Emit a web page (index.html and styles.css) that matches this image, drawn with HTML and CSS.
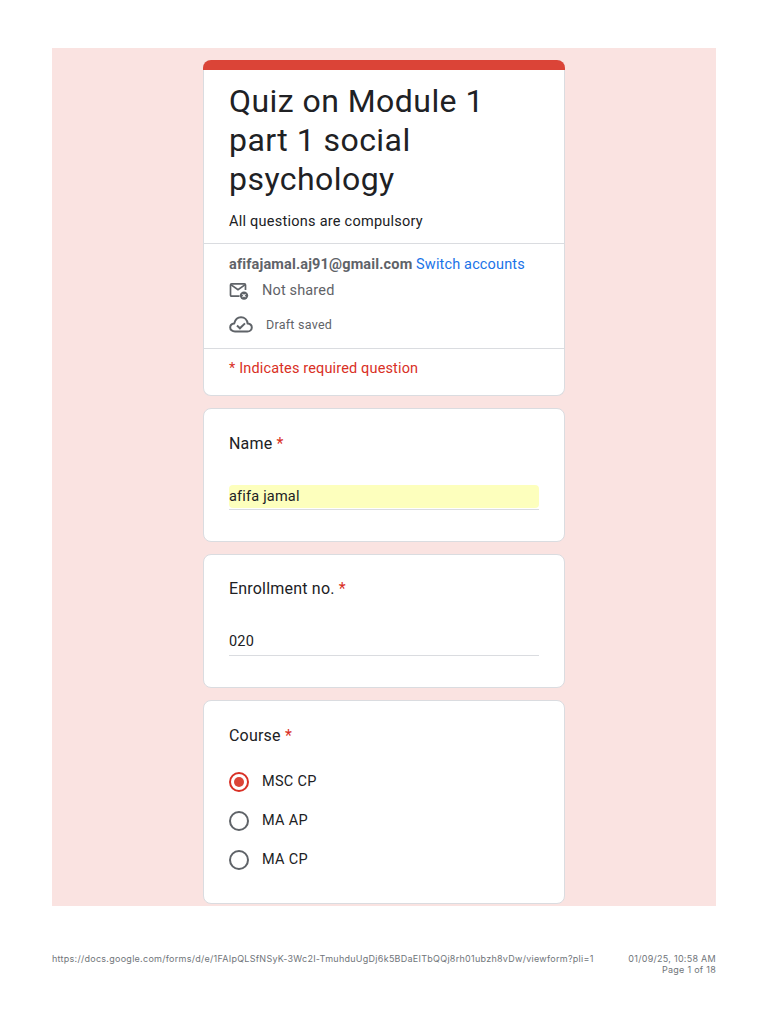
FILE: index.html
```html
<!DOCTYPE html>
<html lang="en">

<head>
    <meta charset="UTF-8">
    <meta name="viewport" content="width=device-width, initial-scale=1.0">
    <title>Quiz on Module 1 part 1 social psychology</title>
    <link rel="stylesheet" href="styles.css">
</head>

<body>
    <main class="sheet">
        <section class="card header_card">
            <div class="top_bar"></div>
            <div class="title_box">
                <h1>Quiz on Module 1 part 1 social psychology</h1>
                <p class="desc">All questions are compulsory</p>
            </div>
            <div class="account_box">
                <p class="account"><b>afifajamal.aj91@gmail.com</b> <a href="#">Switch accounts</a></p>
                <div class="status_row">
                    <svg class="status_icon mail_icon" width="20" height="20" viewBox="0 0 20 20" fill="none" stroke="#5f6368" stroke-width="1.7">
                        <path d="M10.5 15.2H2.6C1.9 15.2 1.5 14.8 1.5 14.1V3.9C1.5 3.2 1.9 2.8 2.6 2.8H15.4C16.1 2.8 16.5 3.2 16.5 3.9V9"/>
                        <path d="M1.8 3.6L9 8.8L16.2 3.6"/>
                        <circle cx="15" cy="14.6" r="4.2" fill="#5f6368" stroke="none"/>
                        <path d="M13.5 13.1L16.5 16.1M16.5 13.1L13.5 16.1" stroke="#fff" stroke-width="1.1"/>
                    </svg>
                    <span class="not_shared">Not shared</span>
                </div>
                <div class="status_row draft_row">
                    <svg class="status_icon cloud_icon" width="24" height="20" viewBox="0 0 24 20" fill="none" stroke="#5f6368" stroke-width="2">
                        <path d="M6 17.5C3.2 17.5 1.2 15.7 1.2 13.4C1.2 11.3 2.9 9.6 5.2 9.4C6.2 5.6 8.9 3.2 12 3.2C15.4 3.2 18.2 5.9 18.6 9.4C21 9.6 22.8 11.2 22.8 13.4C22.8 15.7 20.9 17.5 18.4 17.5Z"/>
                        <path d="M8 11.6L10.9 14.3L16 9.4"/>
                    </svg>
                    <span class="draft">Draft saved</span>
                </div>
            </div>
            <p class="required_note">* Indicates required question</p>
        </section>

        <section class="card field_card">
            <h2>Name <span class="star">*</span></h2>
            <div class="answer filled">afifa jamal</div>
        </section>

        <section class="card field_card enroll_card">
            <h2>Enrollment no. <span class="star">*</span></h2>
            <div class="answer">020</div>
        </section>

        <section class="card course_card">
            <h2>Course <span class="star">*</span></h2>
            <ul class="options">
                <li><span class="radio checked"></span>MSC CP</li>
                <li><span class="radio"></span>MA AP</li>
                <li><span class="radio"></span>MA CP</li>
            </ul>
        </section>
    </main>

    <footer class="page_foot">
        <span class="url">https://docs.google.com/forms/d/e/1FAIpQLSfNSyK-3Wc2I-TmuhduUgDj6k5BDaEITbQQj8rh01ubzh8vDw/viewform?pli=1</span>
        <span class="stamp">01/09/25, 10:58 AM<br>Page 1 of 18</span>
    </footer>
</body>

</html>
```

FILE: styles.css
```css
*,
html {
    padding: 0;
    margin: 0;
    box-sizing: border-box;
}

body {
    background-color: #fff;
    font-family: Roboto, "Liberation Sans", sans-serif;
    color: #202124;
}

.sheet {
    margin: 48px 52px 0;
    height: 858px;
    padding-top: 12px;
    background-color: #fae3e1;
    display: flex;
    flex-direction: column;
    align-items: center;
    gap: 12px;
}

.card {
    width: 362px;
    background-color: #fff;
    border: solid 1px #dadce0;
    border-radius: 8px;
}

.header_card {
    height: 336px;
    border-top: none;
}

.top_bar {
    height: 10px;
    margin: 0 -1px;
    background-color: #db4437;
    border-radius: 8px 8px 0 0;
}

.title_box {
    height: 174px;
    padding: 12px 25px 0;
    border-bottom: solid 1px #dadce0;
}

h1 {
    font-size: 32px;
    font-weight: 400;
    line-height: 39px;
    letter-spacing: 0.45px;
}

.desc {
    margin-top: 13px;
    font-size: 14.5px;
    line-height: 20px;
    letter-spacing: 0.25px;
}

.account_box {
    height: 105px;
    padding: 12px 25px 0;
    border-bottom: solid 1px #dadce0;
    color: #5f6368;
    letter-spacing: 0.15px;
}

.account {
    font-size: 14.5px;
    line-height: 18px;
    white-space: nowrap;
}

.account a {
    color: #1a73e8;
    text-decoration: none;
}

.status_row {
    display: flex;
    align-items: center;
    height: 20px;
    margin-top: 6px;
}

.draft_row {
    margin-top: 14px;
}

.status_icon {
    flex: none;
}

.mail_icon {
    margin-top: 2px;
}

.not_shared {
    margin-left: 13px;
    font-size: 14.5px;
}

.draft {
    margin-left: 13px;
    font-size: 12.5px;
    letter-spacing: 0.25px;
}

.required_note {
    padding: 11px 25px 0;
    font-size: 14.5px;
    line-height: 18px;
    letter-spacing: 0.15px;
    color: #d93025;
}

.field_card {
    position: relative;
    z-index: 0;
    height: 134px;
    padding: 25px 25px 0;
}

.enroll_card {
    padding-top: 24px;
}

.enroll_card .answer {
    margin-top: 32px;
}

h2 {
    font-size: 16px;
    font-weight: 400;
    line-height: 20px;
    letter-spacing: 0.2px;
}

.star {
    color: #d93025;
}

.answer {
    margin-top: 31px;
    height: 25px;
    font-size: 14.5px;
    line-height: 21px;
    letter-spacing: 0.2px;
    border-bottom: solid 1px #dadce0;
}

.filled {
    position: relative;
    line-height: 23px;
}

.filled::before {
    content: "";
    position: absolute;
    left: 0;
    right: 0;
    top: 0;
    height: 23px;
    background-color: #fdffbd;
    border-radius: 4px;
    z-index: -1;
}

.course_card {
    height: 204px;
    padding: 25px 25px 0;
}

.options {
    list-style: none;
    margin-top: 16px;
}

.options li {
    display: flex;
    align-items: center;
    height: 39px;
    font-size: 14.5px;
    letter-spacing: 0.3px;
}

.radio {
    width: 20px;
    height: 20px;
    margin-right: 13px;
    border: solid 2px #5f6368;
    border-radius: 50%;
    display: flex;
    align-items: center;
    justify-content: center;
}

.checked {
    border-color: #d93025;
}

.checked::after {
    content: "";
    width: 10px;
    height: 10px;
    border-radius: 50%;
    background-color: #db4437;
}

.page_foot {
    display: flex;
    justify-content: space-between;
    margin: 47px 52px 0;
    font-family: Inter, Roboto, sans-serif;
    font-size: 9px;
    line-height: 11px;
    letter-spacing: 0.27px;
    color: #70757a;
}

.stamp {
    text-align: right;
}
```
